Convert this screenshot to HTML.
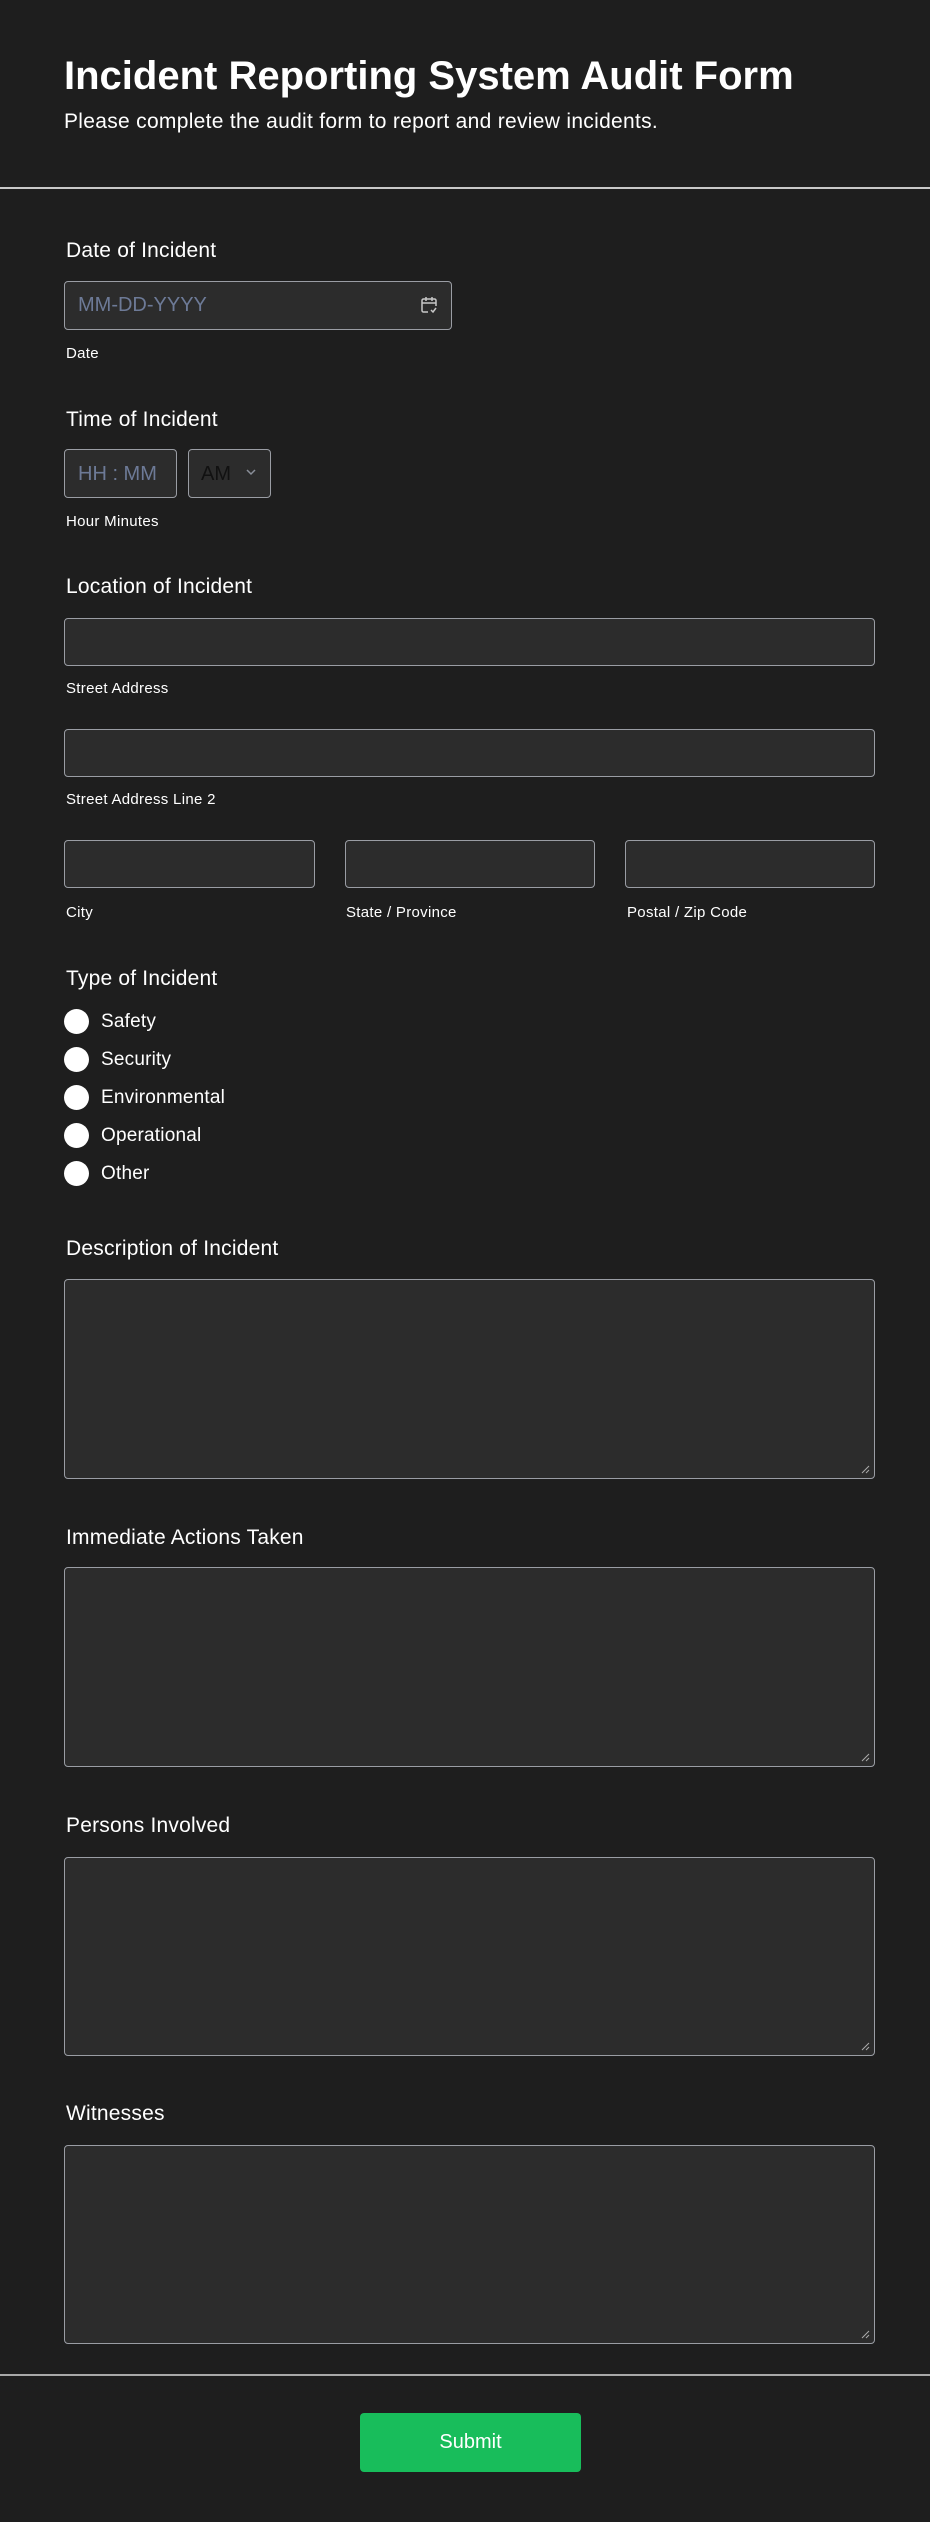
<!DOCTYPE html>
<html><head><meta charset="utf-8"><style>
*{box-sizing:border-box;margin:0;padding:0}
body{width:930px;height:2522px;background:#1e1e1e;color:#fff;font-family:"Liberation Sans",sans-serif;position:relative;overflow:hidden}
.a{position:absolute}
.lbl{position:absolute;left:66px;font-size:21px;line-height:24px;color:#fff;letter-spacing:0.2px}
.sub{position:absolute;font-size:15px;line-height:18px;color:#fff;letter-spacing:0.3px}
.in{position:absolute;background:#2c2c2c;border:1px solid #9a9da4;border-radius:4px}
.rad{position:absolute;left:64px;width:25px;height:25px;border-radius:50%;background:#fff}
.rt{position:absolute;left:101px;font-size:19px;line-height:22px;letter-spacing:0.2px}
.grip{position:absolute;right:4px;bottom:4px;width:9px;height:9px}
</style></head><body>
<div class="a" style="left:64px;top:52px;font-size:40px;line-height:48px;font-weight:bold">Incident Reporting System Audit Form</div>
<div class="a" style="left:64px;top:109px;font-size:21px;line-height:26px;letter-spacing:0.3px">Please complete the audit form to report and review incidents.</div>
<div class="a" style="left:0;top:187px;width:930px;height:2px;background:#c9c9c9"></div>

<div class="lbl" style="top:239px">Date of Incident</div>
<div class="in" style="left:64px;top:281px;width:388px;height:49px"></div>
<div class="a" style="left:78px;top:293px;font-size:20px;line-height:24px;color:#6d7a97">MM-DD-YYYY</div>
<svg class="a" style="left:419px;top:295px" width="20" height="20" viewBox="0 0 20 20" fill="none" stroke="#c8c8c8" stroke-width="1.5"><path d="M9 17H4.5a1.5 1.5 0 0 1-1.5-1.5V5.5A1.5 1.5 0 0 1 4.5 4h11A1.5 1.5 0 0 1 17 5.5V11M3 8h14M7 2v4M13 2v4M12 15l2 2 3-4"/></svg>
<div class="sub" style="left:66px;top:345px">Date</div>

<div class="lbl" style="top:408px">Time of Incident</div>
<div class="in" style="left:64px;top:449px;width:113px;height:49px"></div>
<div class="a" style="left:78px;top:462px;font-size:20px;line-height:24px;color:#6d7a97">HH : MM</div>
<div class="in" style="left:188px;top:449px;width:83px;height:49px"></div>
<div class="a" style="left:201px;top:462px;font-size:20px;line-height:24px;color:#111">AM</div>
<svg class="a" style="left:245px;top:467px" width="12" height="10" viewBox="0 0 12 10" fill="none" stroke="#8a8f99" stroke-width="1.5"><path d="M2 3l4 4 4-4"/></svg>
<div class="sub" style="left:66px;top:513px">Hour Minutes</div>

<div class="lbl" style="top:575px">Location of Incident</div>
<div class="in" style="left:64px;top:618px;width:811px;height:48px"></div>
<div class="sub" style="left:66px;top:680px">Street Address</div>
<div class="in" style="left:64px;top:729px;width:811px;height:48px"></div>
<div class="sub" style="left:66px;top:791px">Street Address Line 2</div>
<div class="in" style="left:64px;top:840px;width:251px;height:48px"></div>
<div class="in" style="left:345px;top:840px;width:250px;height:48px"></div>
<div class="in" style="left:625px;top:840px;width:250px;height:48px"></div>
<div class="sub" style="left:66px;top:904px">City</div>
<div class="sub" style="left:346px;top:904px">State / Province</div>
<div class="sub" style="left:627px;top:904px">Postal / Zip Code</div>

<div class="lbl" style="top:967px">Type of Incident</div>
<div class="rad" style="top:1009px"></div><div class="rt" style="top:1011px">Safety</div>
<div class="rad" style="top:1047px"></div><div class="rt" style="top:1049px">Security</div>
<div class="rad" style="top:1085px"></div><div class="rt" style="top:1087px">Environmental</div>
<div class="rad" style="top:1123px"></div><div class="rt" style="top:1125px">Operational</div>
<div class="rad" style="top:1161px"></div><div class="rt" style="top:1163px">Other</div>

<div class="lbl" style="top:1237px">Description of Incident</div>
<div class="in" style="left:64px;top:1279px;width:811px;height:200px"><svg class="grip" viewBox="0 0 9 9" stroke="#aaa"><path d="M1 8L8 1M5 8L8 5"/></svg></div>
<div class="lbl" style="top:1526px">Immediate Actions Taken</div>
<div class="in" style="left:64px;top:1567px;width:811px;height:200px"><svg class="grip" viewBox="0 0 9 9" stroke="#aaa"><path d="M1 8L8 1M5 8L8 5"/></svg></div>
<div class="lbl" style="top:1814px">Persons Involved</div>
<div class="in" style="left:64px;top:1857px;width:811px;height:199px"><svg class="grip" viewBox="0 0 9 9" stroke="#aaa"><path d="M1 8L8 1M5 8L8 5"/></svg></div>
<div class="lbl" style="top:2102px">Witnesses</div>
<div class="in" style="left:64px;top:2145px;width:811px;height:199px"><svg class="grip" viewBox="0 0 9 9" stroke="#aaa"><path d="M1 8L8 1M5 8L8 5"/></svg></div>

<div class="a" style="left:0;top:2374px;width:930px;height:2px;background:#a8a8a8"></div>
<div class="a" style="left:360px;top:2413px;width:221px;height:59px;background:#18bd5b;border-radius:4px;text-align:center;font-size:20px;line-height:59px">Submit</div>
</body></html>
